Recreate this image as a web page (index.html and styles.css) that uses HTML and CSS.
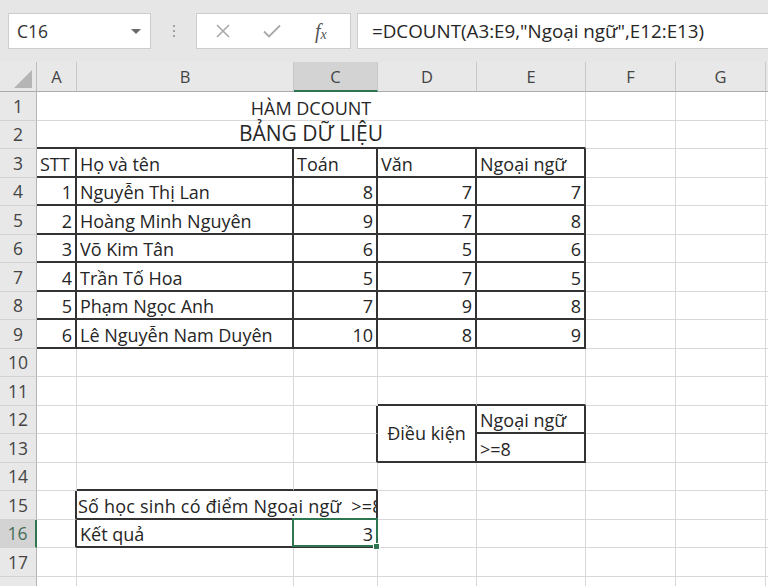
FILE: index.html
```html
<!DOCTYPE html>
<html lang="vi">
<head>
<meta charset="utf-8">
<title>HÀM DCOUNT</title>
<link rel="stylesheet" href="styles.css">
</head>
<body>
<div class="toolbar">
  <div class="namebox"><span class="nb-text">C16</span><span class="nb-arrow"></span></div>
  <div class="dots"><span></span><span></span><span></span></div>
  <div class="fbtns">
    <svg class="ico-x" width="14" height="14" viewBox="0 0 14 14"><path d="M1 1L13 13M13 1L1 13" stroke="#a9a9a9" stroke-width="1.6" fill="none"/></svg>
    <svg class="ico-ok" width="18" height="14" viewBox="0 0 18 14"><path d="M1 7.5L6 12.5L17 1.5" stroke="#a9a9a9" stroke-width="1.8" fill="none"/></svg>
    <span class="fx"><i>f</i><span class="fx-x">x</span></span>
  </div>
  <div class="formula">=DCOUNT(A3:E9,"Ngoại ngữ",E12:E13)</div>
</div>
<div class="sheet">
  <!-- header row -->
  <div class="corner"><svg width="18" height="18" viewBox="0 0 18 18"><polygon points="18,0 18,18 0,18" fill="#b5b5b5"/></svg></div>
  <div class="ch">A</div><div class="ch">B</div><div class="ch ch-sel">C</div><div class="ch">D</div><div class="ch">E</div><div class="ch">F</div><div class="ch">G</div><div class="ch"></div>

  <!-- row 1 -->
  <div class="rh">1</div>
  <div class="c m5 ctr">HÀM DCOUNT</div>
  <div class="c"></div><div class="c"></div><div class="c"></div>

  <!-- row 2 -->
  <div class="rh">2</div>
  <div class="c m5 ctr big bB">BẢNG DỮ LIỆU</div>
  <div class="c"></div><div class="c"></div><div class="c"></div>

  <!-- row 3 -->
  <div class="rh">3</div>
  <div class="c bR bB">STT</div><div class="c bR bB">Họ và tên</div><div class="c bR bB">Toán</div><div class="c bR bB">Văn</div><div class="c bR bB">Ngoại ngữ</div>
  <div class="c"></div><div class="c"></div><div class="c"></div>

  <!-- row 4 -->
  <div class="rh">4</div>
  <div class="c bR bB r">1</div><div class="c bR bB">Nguyễn Thị Lan</div><div class="c bR bB r">8</div><div class="c bR bB r">7</div><div class="c bR bB r">7</div>
  <div class="c"></div><div class="c"></div><div class="c"></div>

  <!-- row 5 -->
  <div class="rh">5</div>
  <div class="c bR bB r">2</div><div class="c bR bB">Hoàng Minh Nguyên</div><div class="c bR bB r">9</div><div class="c bR bB r">7</div><div class="c bR bB r">8</div>
  <div class="c"></div><div class="c"></div><div class="c"></div>

  <!-- row 6 -->
  <div class="rh">6</div>
  <div class="c bR bB r">3</div><div class="c bR bB">Võ Kim Tân</div><div class="c bR bB r">6</div><div class="c bR bB r">5</div><div class="c bR bB r">6</div>
  <div class="c"></div><div class="c"></div><div class="c"></div>

  <!-- row 7 -->
  <div class="rh">7</div>
  <div class="c bR bB r">4</div><div class="c bR bB">Trần Tố Hoa</div><div class="c bR bB r">5</div><div class="c bR bB r">7</div><div class="c bR bB r">5</div>
  <div class="c"></div><div class="c"></div><div class="c"></div>

  <!-- row 8 -->
  <div class="rh">8</div>
  <div class="c bR bB r">5</div><div class="c bR bB">Phạm Ngọc Anh</div><div class="c bR bB r">7</div><div class="c bR bB r">9</div><div class="c bR bB r">8</div>
  <div class="c"></div><div class="c"></div><div class="c"></div>

  <!-- row 9 -->
  <div class="rh">9</div>
  <div class="c bR bB r">6</div><div class="c bR bB">Lê Nguyễn Nam Duyên</div><div class="c bR bB r">10</div><div class="c bR bB r">8</div><div class="c bR bB r">9</div>
  <div class="c"></div><div class="c"></div><div class="c"></div>

  <!-- row 10 -->
  <div class="rh">10</div>
  <div class="c"></div><div class="c"></div><div class="c"></div><div class="c"></div><div class="c"></div><div class="c"></div><div class="c"></div><div class="c"></div>

  <!-- row 11 -->
  <div class="rh">11</div>
  <div class="c"></div><div class="c"></div><div class="c"></div><div class="c bB"></div><div class="c bB"></div><div class="c"></div><div class="c"></div><div class="c"></div>

  <!-- row 12 -->
  <div class="rh">12</div>
  <div class="c"></div><div class="c"></div><div class="c bR"></div>
  <div class="c bR bB ctr mid span2">Điều kiện</div>
  <div class="c bR bB">Ngoại ngữ</div>
  <div class="c"></div><div class="c"></div><div class="c"></div>

  <!-- row 13 -->
  <div class="rh">13</div>
  <div class="c"></div><div class="c"></div><div class="c bR"></div>
  <div class="c bR bB">&gt;=8</div>
  <div class="c"></div><div class="c"></div><div class="c"></div>

  <!-- row 14 -->
  <div class="rh">14</div>
  <div class="c"></div><div class="c bB"></div><div class="c bB"></div><div class="c"></div><div class="c"></div><div class="c"></div><div class="c"></div><div class="c"></div>

  <!-- row 15 -->
  <div class="rh">15</div>
  <div class="c bR"></div>
  <div class="c m2 bR bB clip">Số học sinh có điểm Ngoại ngữ&nbsp; &gt;=8</div>
  <div class="c"></div><div class="c"></div><div class="c"></div><div class="c"></div><div class="c"></div>

  <!-- row 16 -->
  <div class="rh rh-sel">16</div>
  <div class="c bR"></div>
  <div class="c bR bB">Kết quả</div>
  <div class="c bR bB r sel">3</div>
  <div class="c"></div><div class="c"></div><div class="c"></div><div class="c"></div><div class="c"></div>

  <!-- row 17 -->
  <div class="rh">17</div>
  <div class="c"></div><div class="c"></div><div class="c"></div><div class="c"></div><div class="c"></div><div class="c"></div><div class="c"></div><div class="c"></div>

  <!-- row 18 (only its top edge is visible) -->
  <div class="rh"></div>
  <div class="c"></div><div class="c"></div><div class="c"></div><div class="c"></div><div class="c"></div><div class="c"></div><div class="c"></div><div class="c"></div>
</div>
</body>
</html>
```

FILE: styles.css
```css
html, body {
  margin: 0;
  padding: 0;
}
body {
  width: 768px;
  height: 586px;
  overflow: hidden;
  background: #ffffff;
  font-family: "Open Sans", "Noto Sans", sans-serif;
  color: #262626;
}

/* ---------- toolbar / formula bar ---------- */
.toolbar {
  height: 62px;
  box-sizing: border-box;
  padding-top: 13px;
  background: #e6e6e6;
  display: flex;
  align-items: flex-start;
}
.namebox {
  margin-left: 8px;
  width: 143px;
  height: 36px;
  box-sizing: border-box;
  background: #fff;
  border: 1px solid #cdcdcd;
  display: flex;
  align-items: center;
  justify-content: space-between;
  padding: 0 9px 0 8px;
}
.nb-text {
  font-size: 17.5px;
  color: #333;
}
.nb-arrow {
  width: 0;
  height: 0;
  border-left: 5px solid transparent;
  border-right: 5px solid transparent;
  border-top: 5px solid #6a6a6a;
}
.dots {
  width: 45px;
  height: 36px;
  display: flex;
  flex-direction: column;
  align-items: center;
  justify-content: center;
  gap: 3px;
}
.dots span {
  width: 2px;
  height: 2px;
  background: #a0a0a0;
}
.fbtns {
  width: 155px;
  height: 36px;
  box-sizing: border-box;
  background: #fff;
  border: 1px solid #cdcdcd;
  display: flex;
  align-items: center;
  padding-left: 19px;
}
.ico-x { margin-right: 33px; }
.ico-ok { margin-right: 34px; }
.fx {
  font-family: "Liberation Serif", serif;
  font-style: italic;
  font-size: 20px;
  color: #555;
  line-height: 1;
}
.fx i { font-style: italic; }
.fx-x {
  font-size: 14px;
  position: relative;
  top: 1px;
}
.formula {
  margin-left: 6px;
  flex: 1;
  height: 36px;
  box-sizing: border-box;
  background: #fff;
  border: 1px solid #cdcdcd;
  border-right: none;
  display: flex;
  align-items: center;
  padding-left: 14px;
  font-size: 18.8px;
  color: #262626;
  white-space: nowrap;
}

/* ---------- sheet grid ---------- */
.sheet {
  display: grid;
  grid-template-columns: 37px 40px 217px 84px 99px 109px 90px 90px 30px;
  grid-template-rows: 30px repeat(18, 28.5px);
  width: 796px;
}
.corner, .ch, .rh {
  background: #e8e8e8;
  box-sizing: border-box;
  color: #444;
  display: flex;
  align-items: center;
  justify-content: center;
}
.corner {
  border-right: 1px solid #bdbdbd;
  border-bottom: 1px solid #ababab;
  justify-content: flex-end;
  align-items: flex-end;
  padding: 0 4px 3px 0;
}
.ch {
  border-right: 1px solid #c8c8c8;
  border-bottom: 1px solid #ababab;
  font-size: 16.5px;
}
.ch-sel {
  background: #d3d3d3;
  border-bottom: 2px solid #2d7651;
}
.rh {
  border-right: 1px solid #b5b5b5;
  border-bottom: 1px solid #d2d2d2;
  font-size: 17.5px;
}
.rh-sel {
  background: #d3d3d3;
  border-right: 2px solid #2d7651;
  color: #466d58;
}

.c {
  box-sizing: border-box;
  border-right: 1px solid #d8d8d8;
  border-bottom: 1px solid #d8d8d8;
  background: #fff;
  display: flex;
  align-items: flex-end;
  padding: 0 3px 0 3px;
  font-size: 18px;
  line-height: 24px;
  white-space: nowrap;
  min-width: 0;
}
.r { justify-content: flex-end; }
.ctr { justify-content: center; }
.mid { align-items: center; }
.big { font-size: 21px; line-height: 27px; }
.m5 { grid-column: span 5; }
.m2 { grid-column: span 2; }
.span2 { grid-row: span 2; }
.clip { overflow: hidden; padding: 0 0 0 1px; letter-spacing: 0.2px; }
.bR { border-right: 2px solid #333; }
.bB { border-bottom: 2px solid #333; }

.sel { position: relative; }
.sel::after {
  content: "";
  position: absolute;
  left: -2px;
  top: -2px;
  right: -2px;
  bottom: -1px;
  border: 2px solid #2d7651;
}
.sel::before {
  content: "";
  position: absolute;
  right: -4px;
  bottom: -4px;
  width: 5px;
  height: 5px;
  background: #2d7651;
  border: 1px solid #fff;
  z-index: 2;
}
```
